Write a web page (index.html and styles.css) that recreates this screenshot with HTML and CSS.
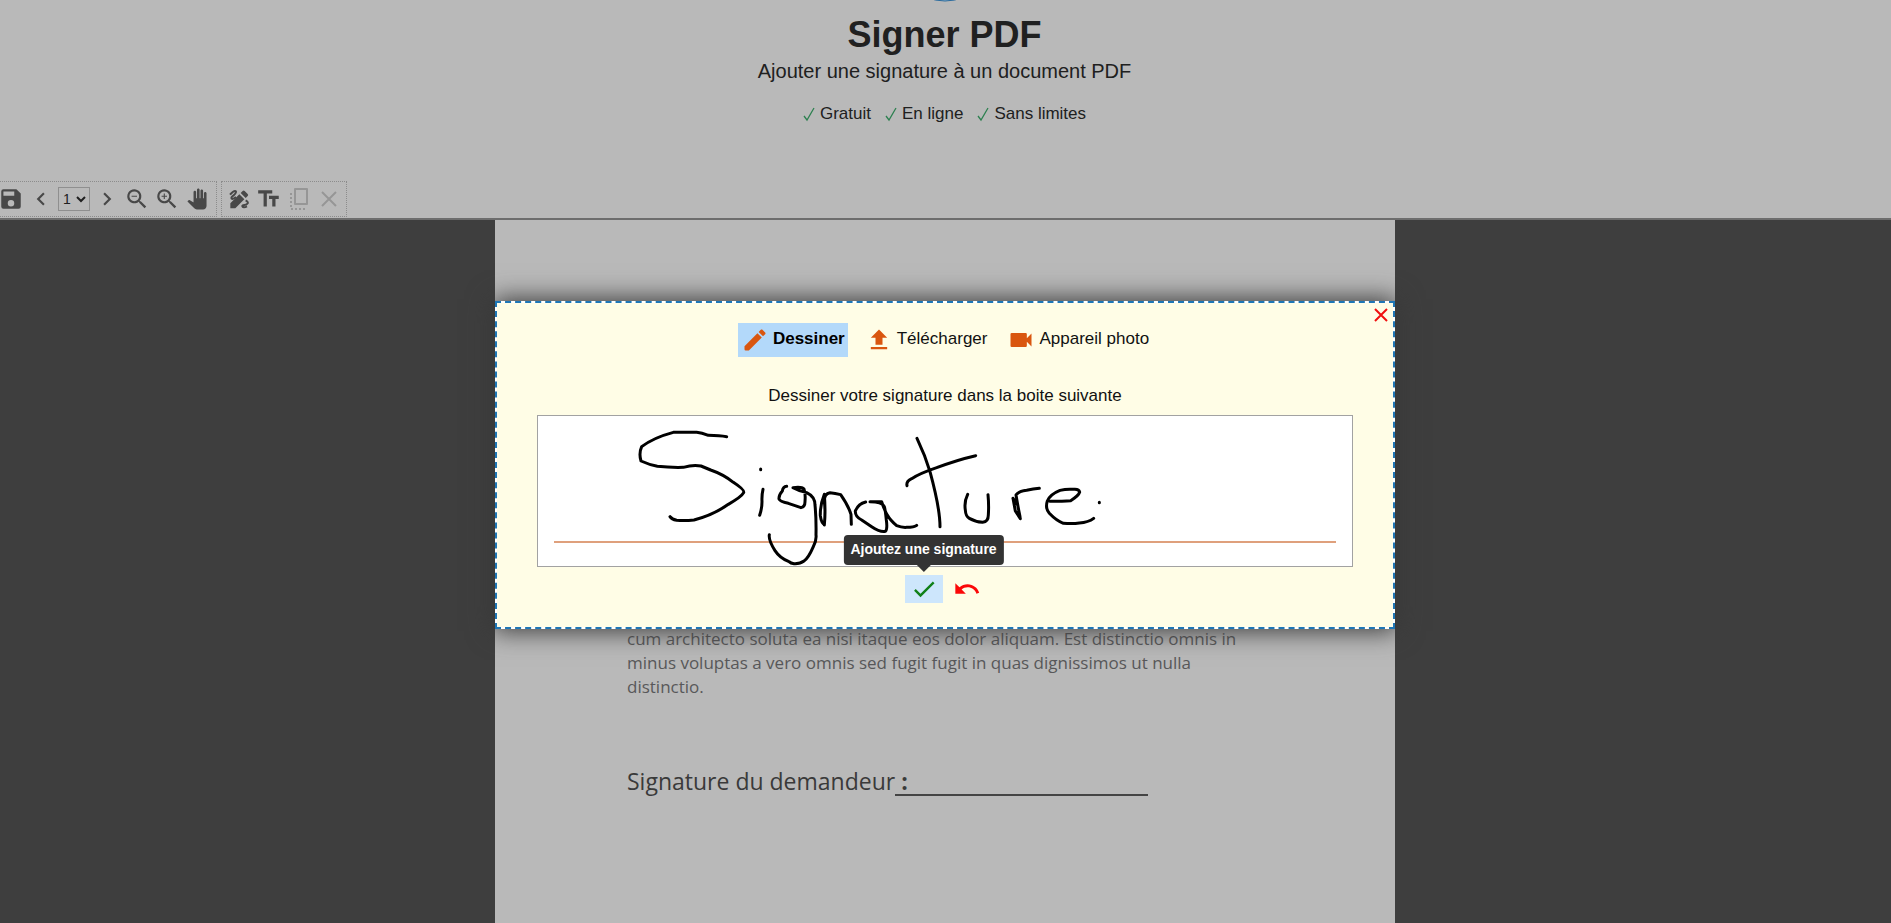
FILE: index.html
```
<!DOCTYPE html>
<html lang="fr">
<head>
<meta charset="utf-8">
<title>Signer PDF</title>
<link rel="stylesheet" href="styles.css">
</head>
<body>
<header class="hero">
  <svg class="hero-logo" viewBox="0 0 100 100" aria-hidden="true"><circle cx="50" cy="50" r="49" fill="#8fb4cc" stroke="#2b6a9c" stroke-width="1"/></svg>
  <h1 class="hero-title">Signer PDF</h1>
  <p class="hero-subtitle">Ajouter une signature à un document PDF</p>
  <ul class="features">
    <li><svg class="tick" viewBox="0 0 12 16" aria-hidden="true"><path d="M1 10l3 4L11 2"/></svg>Gratuit</li>
    <li><svg class="tick" viewBox="0 0 12 16" aria-hidden="true"><path d="M1 10l3 4L11 2"/></svg>En ligne</li>
    <li><svg class="tick" viewBox="0 0 12 16" aria-hidden="true"><path d="M1 10l3 4L11 2"/></svg>Sans limites</li>
  </ul>
</header>

<nav class="toolbar" aria-label="Outils">
  <div class="tool-group tool-group-first">
    <button class="tool" type="button" aria-label="Enregistrer"><svg viewBox="0 0 24 24"><path d="M15 9H5V5h10m-3 14a3 3 0 1 1 0-6 3 3 0 0 1 0 6m5-16H5a2 2 0 0 0-2 2v14a2 2 0 0 0 2 2h14a2 2 0 0 0 2-2V7z"/></svg></button>
    <button class="tool" type="button" aria-label="Page précédente"><svg viewBox="0 0 24 24"><path d="M15.400 16.600L10.800 12l4.600-4.600L14 6l-6 6 6 6z"/></svg></button>
    <select class="page-select" aria-label="Page"><option>1</option></select>
    <button class="tool" type="button" aria-label="Page suivante"><svg viewBox="0 0 24 24"><path d="M8.600 16.600l4.600-4.600-4.600-4.600L10 6l6 6-6 6z"/></svg></button>
    <button class="tool" type="button" aria-label="Zoom arrière"><svg viewBox="0 0 24 24"><path d="M15.500 14h-.79l-.28-.27A6.500 6.500 0 1 0 13.730 14.430l.27.28v.79l5 5 1.500-1.500-5-5m-6 0a4.500 4.500 0 1 1 0-9 4.500 4.500 0 0 1 0 9M7 9h5v1H7z"/></svg></button>
    <button class="tool" type="button" aria-label="Zoom avant"><svg viewBox="0 0 24 24"><path d="M15.500 14h-.79l-.28-.27A6.500 6.500 0 1 0 13.730 14.430l.27.28v.79l5 5 1.500-1.500-5-5m-6 0a4.500 4.500 0 1 1 0-9 4.500 4.500 0 0 1 0 9M12 10h-2v2H9v-2H7V9h2V7h1v2h2z"/></svg></button>
    <button class="tool" type="button" aria-label="Déplacer"><svg viewBox="-3 -3 30 30"><path d="M23 5.500V20c0 2.200-1.800 4-4 4h-7.300c-1.080 0-2.100-.43-2.850-1.190L1 14.830s1.260-1.230 1.300-1.250c.22-.19.49-.29.79-.29.22 0 .42.06.6.16.04.01 4.310 2.460 4.310 2.460V4c0-.83.67-1.500 1.500-1.500S11 3.170 11 4v7h1V1.500c0-.83.67-1.500 1.500-1.500S15 .67 15 1.500V11h1V2.500c0-.83.67-1.500 1.500-1.500s1.500.67 1.500 1.500V11h1V5.500c0-.83.67-1.500 1.500-1.500s1.500.67 1.500 1.500z"/></svg></button>
  </div>
  <div class="tool-group">
    <button class="tool" type="button" aria-label="Signer"><svg viewBox="-9 -6 78 78"><path d="M4 61V46L31 19l15 15L19 61zM35 15l6-6q3-3 6 0l9 9q3 3 0 6l-6 6z"/><path class="stroke" d="M3 20q10-11 15-11c6 0 2 8-3 12-5 5-10 7-7 11 3 3 7-1 13-5M50 37c7 4 9 8 4 11-5 4-15 2-14 7 1 5 8 3 14 0" stroke-width="6"/></svg></button>
    <button class="tool" type="button" aria-label="Texte"><svg viewBox="0 0 24 24"><path d="M2 4v3h5v12h3V7h5V4zm19 5h-9v3h3v7h3v-7h3z"/></svg></button>
    <button class="tool" type="button" aria-label="Dupliquer" disabled><svg viewBox="0 0 26 26"><path class="stroke" d="M9 3h12v15H9z" stroke-width="2" stroke-linejoin="round"/><path class="stroke" d="M5 7v16h14" stroke-width="2" stroke-dasharray="2 2"/></svg></button>
    <button class="tool" type="button" aria-label="Supprimer" disabled><svg viewBox="0 0 26 26"><path class="stroke" d="M6 6l14 14M20 6L6 20" stroke-width="2"/></svg></button>
  </div>
</nav>

<main class="viewer">
  <article class="page">
    <p class="page-text">cum architecto soluta ea nisi itaque eos dolor aliquam. Est distinctio omnis in<br>minus voluptas a vero omnis sed fugit fugit in quas dignissimos ut nulla<br>distinctio.</p>
    <p class="sign-line">Signature du demandeur<span class="sign-blank">&nbsp;<b>:</b></span></p>
  </article>
</main>

<section class="dialog" role="dialog" aria-label="Ajouter une signature">
  <button class="close" type="button" aria-label="Fermer"><svg viewBox="0 0 14 14"><path d="M1 1l12 12M13 1L1 13"/></svg></button>
  <div class="tabs">
    <button class="tab tab-active" type="button"><svg viewBox="0 0 24 24"><path d="M20.710 7.040c.39-.39.39-1.040 0-1.410l-2.340-2.340c-.37-.39-1.020-.39-1.410 0l-1.840 1.830 3.750 3.750M3 17.250V20q0 1 1 1h2.750L17.810 9.930l-3.750-3.750z"/></svg><span>Dessiner</span></button>
    <button class="tab" type="button"><svg viewBox="0 0 24 24"><path d="M9 16v-6H5l7-7 7 7h-4v6zm-4 4v-2h14v2z"/></svg><span>Télécharger</span></button>
    <button class="tab" type="button"><svg viewBox="0 0 24 24"><path d="M17 10.500V7a1 1 0 0 0-1-1H4a1 1 0 0 0-1 1v10a1 1 0 0 0 1 1h12a1 1 0 0 0 1-1v-3.500l4 4v-11z"/></svg><span>Appareil photo</span></button>
  </div>
  <p class="hint">Dessiner votre signature dans la boite suivante</p>
  <div class="pad">
    <svg class="ink" viewBox="0 0 814 150" role="img" aria-label="Signature">
      <path class="guide" d="M16 126h782"/>
      <g transform="translate(-18 -11) scale(.33333)">
        <path d="M620 95Q600 92 565 91Q545 83 530 82H460Q400 98 365 125Q356 145 363 168Q390 180 412 184Q450 188 490 187Q520 178 543 183L572 195Q610 208 640 232Q675 255 671 263Q665 275 625 298Q580 330 522 345Q495 348 470 346Q455 343 450 335"/>
        <path d="M722 192v2M729 253Q725 270 726 290Q726 310 719 331"/>
        <path d="M800 244Q789 245 787 258Q776 270 777 282Q780 290 805 295L843 308Q855 305 855 290Q857 265 852 252Q845 244 819 248Q835 257 860 263Q885 275 885 300Q889 340 888 390Q890 405 880 425Q865 460 852 468Q840 477 822 476Q812 475 807 470Q780 460 765 437Q745 405 748 389"/>
        <path d="M913 360Q917 320 913 268Q900 300 901 332Q904 355 913 358Q917 320 913 290Q912 266 930 263Q945 264 962 269Q985 302 993 328L994 358"/>
      </g>
      <g transform="translate(292 -11) scale(.33333)">
        <path d="M107 291Q85 296 76 318Q75 335 95 345L125 365Q150 382 166 379Q173 373 169 345Q166 315 163 305Q157 290 120 290H155Q165 320 172 330Q180 345 200 362Q215 368 230 367Q252 367 260 361"/>
        <path d="M261 100Q285 150 300 200Q330 310 330 365M231 242Q228 229 245 221Q270 205 320 188Q380 165 437 152"/>
        <path d="M413 268Q402 290 406 315Q407 334 418 340Q435 350 458 352Q475 350 475 330Q477 300 474 269"/>
        <path d="M549 280L556 318L571 341Q563 300 558 270Q568 258 590 256Q610 252 628 250M549 280L563 300L570 335"/>
        <path d="M660 289Q700 289 722 287Q746 272 749 261Q747 252 732 253Q710 251 690 256Q660 268 652 288Q645 310 658 325Q680 348 700 355Q730 357 748 354Q775 352 791 340M808 292v1"/>
      </g>
    </svg>
  </div>
  <div class="actions">
    <div class="confirm">
      <span class="tooltip" role="tooltip">Ajoutez une signature</span>
      <button class="action action-ok" type="button" aria-label="Ajoutez une signature"><svg viewBox="0 0 24 24"><path d="M21 7L9 19l-5.500-5.500 1.410-1.410L9 16.170 19.590 5.590z"/></svg></button>
    </div>
    <button class="action action-undo" type="button" aria-label="Annuler"><svg viewBox="0 0 24 24"><path d="M12.500 8c-2.650 0-5.050.99-6.900 2.600L2 7v9h9l-3.620-3.620c1.390-1.160 3.160-1.880 5.120-1.880 3.540 0 6.550 2.310 7.600 5.500l2.370-.78C21.080 11.030 17.150 8 12.500 8z"/></svg></button>
  </div>
</section>
</body>
</html>
```
FILE: styles.css
```
* { box-sizing: border-box; }
body {
  margin: 0;
  min-height: 100vh;
  display: flex;
  flex-direction: column;
  background: #b9b9b9;
  color: #202020;
  font-family: "Liberation Sans", Arial, sans-serif;
  font-size: 17px;
}
h1, p, ul { margin: 0; padding: 0; }
button { border: 0; padding: 0; background: none; font: inherit; color: inherit; }
svg { display: block; }

.hero {
  display: flex;
  flex-direction: column;
  align-items: center;
  overflow: hidden;
  padding: 0 2px 55px 0;
}
.hero-logo { width: 100px; height: 100px; margin-top: -98px; flex: none; }
.hero-title { margin-top: 13px; font-size: 36px; line-height: 40px; }
.hero-subtitle { margin-top: 4px; font-size: 20px; line-height: 24px; }
.features {
  display: flex;
  gap: 14px;
  margin-top: 20px;
  list-style: none;
  line-height: 22px;
}
.features li { display: flex; align-items: center; gap: 5px; }
.tick { width: 12px; height: 16px; fill: none; stroke: #2d8050; stroke-width: 1.3; }

.toolbar {
  display: flex;
  gap: 4px;
  height: 40px;
  padding-top: 1px;
  border-bottom: 2px solid #6d6d6d;
}
.tool-group {
  display: flex;
  align-items: center;
  height: 36px;
  padding: 0 2px;
  border: 1px dotted #8c8c8c;
}
.tool-group-first { margin-left: -7px; padding-right: 4px; }
.tool { width: 30px; height: 30px; display: grid; place-items: center; color: #484848; }
.tool svg { width: 26px; height: 26px; fill: currentColor; }
.tool:disabled { color: #969696; }
.tool .stroke { fill: none; stroke: currentColor; }
.page-select {
  width: 32px;
  height: 24px;
  margin: 0 2px;
  padding: 0;
  border: 1px solid #8f8f8f;
  border-radius: 0;
  background: #b9b9b9;
  color: #202020;
  font: 14px "Liberation Sans", Arial, sans-serif;
}

.viewer {
  flex: 1;
  display: flex;
  justify-content: center;
  padding-right: 1px;
  background: #3e3e3e;
}
.page {
  width: 900px;
  padding: 407px 132px 0;
  background: #b9b9b9;
  color: #58585a;
  font-family: "Open Sans", sans-serif;
}
.page-text { font-size: 17px; line-height: 24px; white-space: nowrap; }
.sign-line {
  display: flex;
  margin-top: 69px;
  color: #3a3a3a;
  font-size: 23px;
  line-height: 26px;
}
.sign-blank { width: 253px; border-bottom: 2px solid #444; }

.dialog {
  position: absolute;
  top: 301px;
  left: 0;
  right: 1px;
  width: 900px;
  margin: 0 auto;
  padding: 20px 40px 24px;
  border: 2px dashed #1f76b5;
  background: linear-gradient(#fffde6, #fffde6) padding-box, #fff border-box;
  box-shadow: 0 0 24px 2px #383838;
  color: #111;
}
.close { position: absolute; top: 5px; right: 5px; width: 14px; height: 14px; }
.close svg { width: 14px; height: 14px; fill: none; stroke: #f01010; stroke-width: 2; }
.tabs { display: flex; justify-content: center; gap: 14px; }
.tab { display: flex; align-items: center; gap: 4px; height: 34px; padding: 0 3px; }
.tab svg { width: 28px; height: 28px; fill: #d9560f; }
.tab span { padding-bottom: 3px; }
.tab-active { background: #b3d9fa; color: #000; font-weight: bold; }
.hint { margin-top: 29px; line-height: 20px; text-align: center; }
.pad { margin-top: 9px; border: 1px solid #a2a2a2; background: #fff; }
.ink { width: 100%; height: auto; fill: none; stroke: #000; stroke-width: 9; stroke-linecap: round; stroke-linejoin: round; }
.guide { stroke: #dfa07c; stroke-width: 2; stroke-linecap: butt; }
.actions { display: flex; justify-content: center; gap: 5px; margin-top: 8px; }
.confirm { position: relative; }
.action { display: grid; place-items: center; width: 38px; height: 28px; }
.action svg { width: 28px; height: 28px; }
.action-ok { background: #cde6fc; fill: #108018; }
.action-undo { fill: #fb0808; }
.tooltip {
  position: absolute;
  bottom: 38px;
  left: 50%;
  transform: translateX(-50%);
  padding: 0 7px 2px;
  border-radius: 4px;
  background: #333;
  color: #fff;
  font-size: 14px;
  font-weight: bold;
  line-height: 28px;
  white-space: nowrap;
}
.tooltip::after {
  content: "";
  position: absolute;
  top: 100%;
  left: 50%;
  transform: translateX(-50%);
  border: 7px solid transparent;
  border-top-color: #333;
  border-bottom: 0;
}
```
